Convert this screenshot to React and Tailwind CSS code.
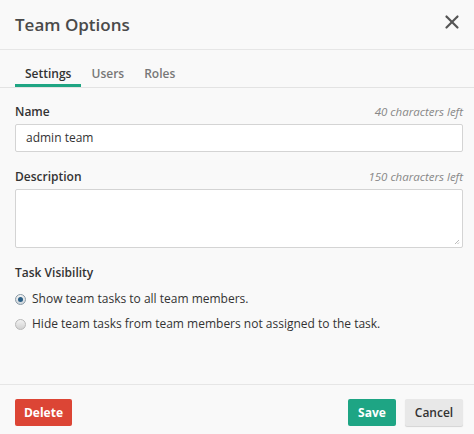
import { X } from 'lucide-react';

function Radio({ checked, label }) {
    return (
        <label className="flex items-center h-[18px] text-[12px] text-[#333]">
            <span
                className={`w-[11px] h-[11px] rounded-full border flex items-center justify-center mr-[6px] ${
                    checked ? 'border-[#8a9aa6] bg-gradient-to-b from-[#f4f4f4] to-[#cfd6dc]' : 'border-[#b8b8b8] bg-gradient-to-b from-[#f2f2f2] to-[#d2d2d2]'
                }`}
            >
                {checked && <span className="w-[5px] h-[5px] rounded-full bg-[#2b5f86]" />}
            </span>
            {label}
        </label>
    );
}

export default function App() {
    return (
        <div className="w-[474px] h-[434px] bg-[#f9f9f9] flex flex-col font-['Open_Sans',sans-serif]">
            <div className="h-[50px] pl-[15px] pr-[11px] flex items-center justify-between border-b border-[#e6e6e6]">
                <h1 className="text-[17px] font-semibold text-[#4a4a4a]">Team Options</h1>
                <X size={22} strokeWidth={2.4} className="text-[#555] -mt-[5px]" />
            </div>

            <div className="flex pl-[15px] pr-[11px] pt-[14px] border-b border-[#e3e3e3]">
                <div className="px-[10px] leading-[20px] text-[12px] font-semibold text-[#333] border-b-[3px] border-[#1fa583]">Settings</div>
                <div className="px-[10px] leading-[20px] text-[12px] font-semibold text-[#777]">Users</div>
                <div className="px-[10px] leading-[20px] text-[12px] font-semibold text-[#777]">Roles</div>
            </div>

            <div className="flex-1 pl-[15px] pr-[11px] pt-[15px]">
                <div className="flex items-center justify-between h-[18px] mb-[3px]">
                    <span className="text-[12px] font-semibold text-[#333]">Name</span>
                    <span className="text-[11.5px] italic text-[#888]">40 characters left</span>
                </div>
                <div className="h-[28px] bg-white border border-[#d4d4d4] rounded-[2px] flex items-center px-[10px] text-[12px] text-[#333]">
                    admin team
                </div>

                <div className="flex items-center justify-between h-[18px] mt-[16px] mb-[3px]">
                    <span className="text-[12px] font-semibold text-[#333]">Description</span>
                    <span className="text-[11.5px] italic text-[#888]">150 characters left</span>
                </div>
                <div className="relative h-[59px] bg-white border border-[#d4d4d4] rounded-[2px]">
                    <svg width="6" height="6" viewBox="0 0 6 6" className="absolute right-[2px] bottom-[2px]">
                        <path d="M5 1 L1 5 M5 3.5 L3.5 5" stroke="#aaa" strokeWidth="0.8" />
                    </svg>
                </div>

                <div className="h-[18px] mt-[16px] flex items-center text-[12px] font-semibold text-[#333]">Task Visibility</div>
                <div className="mt-[8px]">
                    <Radio checked label="Show team tasks to all team members." />
                </div>
                <div className="mt-[7px]">
                    <Radio label="Hide team tasks from team members not assigned to the task." />
                </div>
            </div>

            <div className="border-t border-[#e6e6e6] pl-[15px] pr-[11px] pt-[14px] pb-[8px] flex items-center">
                <button className="h-[27px] w-[57px] rounded-[2px] bg-[#dc4535] text-white text-[12px] font-bold">Delete</button>
                <div className="flex-1" />
                <button className="h-[27px] w-[48px] rounded-[2px] bg-[#1ea584] text-white text-[12px] font-bold">Save</button>
                <button className="ml-[9px] h-[27px] w-[58px] rounded-[2px] bg-[#e8e8e8] text-[#333] text-[12px] font-semibold shadow-[0_1px_1px_rgba(0,0,0,0.15)]">Cancel</button>
            </div>
        </div>
    );
}
